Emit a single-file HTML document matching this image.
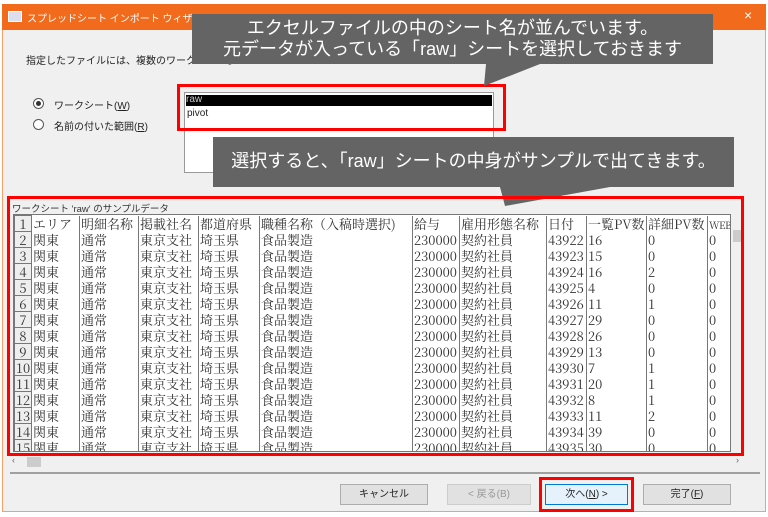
<!DOCTYPE html>
<html><head><meta charset="utf-8"><style>
*{margin:0;padding:0;box-sizing:border-box}
body{width:768px;height:517px;background:#fff;position:relative;overflow:hidden;font-family:"Liberation Sans","Noto Sans CJK JP",sans-serif;font-size:11px;color:#222}
.a{position:absolute}
.win{left:2px;top:4px;width:764px;height:508px;background:#f0f0f0;border:1px solid #f4a06a}
.title{left:2px;top:4px;width:764px;height:26px;background:#f26b1d;color:#fff;font-size:10px}
.call{background:#646464;color:#fff;font-size:18px;line-height:21px;text-align:center}
.red{border:3px solid #f00}
table{border-collapse:collapse;font-family:"Noto Serif CJK SC","Liberation Serif",serif;font-size:13px;background:#fff;table-layout:fixed;width:717px}
td{border-left:1px solid #777;height:16px;line-height:15px;padding:0 1px;white-space:nowrap;overflow:hidden;color:#333}
td:last-child{padding:0 0 0 1px}
.w{font-size:10px;letter-spacing:-0.5px}
td.h{background:#eee;border:1px solid #777;text-align:center;padding:0}
.btn{background:#e1e1e1;border:1px solid #adadad;height:21px;text-align:center;line-height:19px;font-size:10px}
</style></head><body>
<div class="a win"></div>
<div class="a title"><div class="a" style="left:6px;top:7px;width:14px;height:11px;border:1px solid #fff;background:#dde"></div><span class="a" style="left:25px;top:6px">スプレッドシート インポート ウィザード</span><span class="a" style="left:742px;top:3px;font-size:14px">×</span></div>
<div class="a" style="left:26px;top:52px;font-size:10px">指定したファイルには、複数のワークシートま</div>
<div class="a" style="left:33px;top:98px;width:11px;height:11px;border:1px solid #555;border-radius:50%;background:#fff"><div class="a" style="left:2px;top:2px;width:5px;height:5px;border-radius:50%;background:#333"></div></div>
<div class="a" style="left:54px;top:97px;font-size:10px">ワークシート(<u>W</u>)</div>
<div class="a" style="left:33px;top:119px;width:11px;height:11px;border:1px solid #555;border-radius:50%;background:#fff"></div>
<div class="a" style="left:54px;top:118px;font-size:10px">名前の付いた範囲(<u>R</u>)</div>
<div class="a" style="left:184px;top:92px;width:310px;height:81px;background:#fff;border:1px solid #999"></div>
<div class="a" style="left:186px;top:95px;width:306px;height:11px;background:#000;color:#ccc;font-size:10px;line-height:10px">raw</div>
<div class="a" style="left:187px;top:108px;font-size:10px">pivot</div>
<div class="a red" style="left:177px;top:84px;width:329px;height:47px"></div>
<svg class="a" style="left:0;top:0" width="768" height="517"><polygon points="486,64 540,64 484,86" fill="#646464"/><polygon points="500,187 610,187 505,206" fill="#646464"/></svg>
<div class="a call" style="left:192px;top:14px;width:521px;height:50px;padding-top:4px">エクセルファイルの中のシート名が並んでいます。<br>元データが入っている「raw」シートを選択しておきます</div>
<div class="a call" style="left:213px;top:137px;width:521px;height:50px;padding-top:14px">選択すると、「raw」シートの中身がサンプルで出てきます。</div>
<div class="a" style="left:12px;top:201px;font-size:9.5px;color:#333">ワークシート 'raw' のサンプルデータ</div>
<div class="a" style="left:13px;top:214px;width:718px;height:238px;overflow:hidden;border:1px solid #777;background:#fff">
<table>
<colgroup><col style="width:17px"><col style="width:48px"><col style="width:59px"><col style="width:60px"><col style="width:61px"><col style="width:153px"><col style="width:47px"><col style="width:87px"><col style="width:40px"><col style="width:60px"><col style="width:61px"><col style="width:24px"></colgroup>
<tr><td class="h">1</td><td>エリア</td><td>明細名称</td><td>掲載社名</td><td>都道府県</td><td>職種名称（入稿時選択)</td><td>給与</td><td>雇用形態名称</td><td>日付</td><td>一覧PV数</td><td>詳細PV数</td><td><span class="w">WEB</span></td></tr>
<tr><td class="h">2</td><td>関東</td><td>通常</td><td>東京支社</td><td>埼玉県</td><td>食品製造</td><td>230000</td><td>契約社員</td><td>43922</td><td>16</td><td>0</td><td>0</td></tr>
<tr><td class="h">3</td><td>関東</td><td>通常</td><td>東京支社</td><td>埼玉県</td><td>食品製造</td><td>230000</td><td>契約社員</td><td>43923</td><td>15</td><td>0</td><td>0</td></tr>
<tr><td class="h">4</td><td>関東</td><td>通常</td><td>東京支社</td><td>埼玉県</td><td>食品製造</td><td>230000</td><td>契約社員</td><td>43924</td><td>16</td><td>2</td><td>0</td></tr>
<tr><td class="h">5</td><td>関東</td><td>通常</td><td>東京支社</td><td>埼玉県</td><td>食品製造</td><td>230000</td><td>契約社員</td><td>43925</td><td>4</td><td>0</td><td>0</td></tr>
<tr><td class="h">6</td><td>関東</td><td>通常</td><td>東京支社</td><td>埼玉県</td><td>食品製造</td><td>230000</td><td>契約社員</td><td>43926</td><td>11</td><td>1</td><td>0</td></tr>
<tr><td class="h">7</td><td>関東</td><td>通常</td><td>東京支社</td><td>埼玉県</td><td>食品製造</td><td>230000</td><td>契約社員</td><td>43927</td><td>29</td><td>0</td><td>0</td></tr>
<tr><td class="h">8</td><td>関東</td><td>通常</td><td>東京支社</td><td>埼玉県</td><td>食品製造</td><td>230000</td><td>契約社員</td><td>43928</td><td>26</td><td>0</td><td>0</td></tr>
<tr><td class="h">9</td><td>関東</td><td>通常</td><td>東京支社</td><td>埼玉県</td><td>食品製造</td><td>230000</td><td>契約社員</td><td>43929</td><td>13</td><td>0</td><td>0</td></tr>
<tr><td class="h">10</td><td>関東</td><td>通常</td><td>東京支社</td><td>埼玉県</td><td>食品製造</td><td>230000</td><td>契約社員</td><td>43930</td><td>7</td><td>1</td><td>0</td></tr>
<tr><td class="h">11</td><td>関東</td><td>通常</td><td>東京支社</td><td>埼玉県</td><td>食品製造</td><td>230000</td><td>契約社員</td><td>43931</td><td>20</td><td>1</td><td>0</td></tr>
<tr><td class="h">12</td><td>関東</td><td>通常</td><td>東京支社</td><td>埼玉県</td><td>食品製造</td><td>230000</td><td>契約社員</td><td>43932</td><td>8</td><td>1</td><td>0</td></tr>
<tr><td class="h">13</td><td>関東</td><td>通常</td><td>東京支社</td><td>埼玉県</td><td>食品製造</td><td>230000</td><td>契約社員</td><td>43933</td><td>11</td><td>2</td><td>0</td></tr>
<tr><td class="h">14</td><td>関東</td><td>通常</td><td>東京支社</td><td>埼玉県</td><td>食品製造</td><td>230000</td><td>契約社員</td><td>43934</td><td>39</td><td>0</td><td>0</td></tr>
<tr><td class="h">15</td><td>関東</td><td>通常</td><td>東京支社</td><td>埼玉県</td><td>食品製造</td><td>230000</td><td>契約社員</td><td>43935</td><td>30</td><td>0</td><td>0</td></tr>
</table></div>
<div class="a" style="left:733px;top:230px;width:9px;height:12px;background:#ccc"></div>
<div class="a red" style="left:7px;top:196px;width:737px;height:260px"></div>
<div class="a" style="left:12px;top:455px;font-size:9px;color:#666">‹</div>
<div class="a" style="left:27px;top:457px;width:14px;height:10px;background:#ccc"></div>
<div class="a" style="left:736px;top:455px;font-size:9px;color:#666">›</div>
<div class="a" style="left:10px;top:472px;width:750px;height:2px;background:#a0a0a0"></div>
<div class="a btn" style="left:340px;top:484px;width:88px">キャンセル</div>
<div class="a btn" style="left:447px;top:484px;width:84px;color:#999;border-color:#ccc">&lt; 戻る(B)</div>
<div class="a btn" style="left:545px;top:484px;width:83px;border-color:#0078d7;background:#e5f1fb">次へ(<u>N</u>) &gt;</div>
<div class="a btn" style="left:643px;top:484px;width:88px">完了(<u>F</u>)</div>
<div class="a red" style="left:539px;top:477px;width:95px;height:35px"></div>
</body></html>
